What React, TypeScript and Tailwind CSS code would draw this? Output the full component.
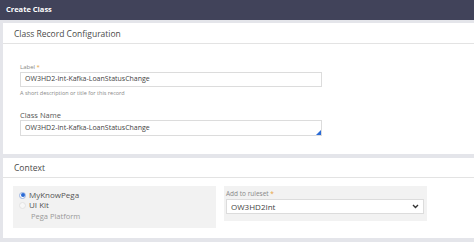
export default function App() {
  return (
    <div className="w-[474px] h-[242px] overflow-hidden bg-[#e4e5ea] font-['Open_Sans',sans-serif] text-[#333]">
      {/* Header bar */}
      <div className="h-[20px] bg-[#41435a] flex items-center px-[6px]">
        <span className="text-white text-[7.5px] font-bold leading-none">Create Class</span>
      </div>

      {/* Class Record Configuration */}
      <div className="mt-[3px] ml-[3px] bg-white h-[131px]">
        <div className="h-[21px] flex items-end pb-[4px] pl-[11px] border-b border-[#e3e3e3]">
          <span className="text-[8.5px] leading-[10px] text-[#4a4a4a]">Class Record Configuration</span>
        </div>
        <div className="pl-[17px] pt-[20px]">
          <div className="text-[6px] leading-[7px] text-[#888] h-[8px]">
            Label<span className="text-[#e8a33c]"> *</span>
          </div>
          <div className="w-[302px] h-[15px] border border-[#dcdcdc] flex items-center px-[4px] text-[7px] text-[#444]">
            OW3HD2-Int-Kafka-LoanStatusChange
          </div>
          <div className="text-[5.5px] text-[#888] leading-[8px] mt-[2px]">
            A short description or title for this record
          </div>
          <div className="text-[7.5px] leading-[9px] text-[#555] mt-[14px] h-[9px]">Class Name</div>
          <div className="relative w-[302px] h-[16px] border border-[#dcdcdc] flex items-center px-[4px] text-[7px] text-[#444]">
            OW3HD2-Int-Kafka-LoanStatusChange
            <svg className="absolute right-0 bottom-0" width="5" height="5" viewBox="0 0 5 5">
              <path d="M5 0 L5 5 L0 5 Z" fill="#2a6bd6" />
            </svg>
          </div>
        </div>
      </div>

      {/* Context */}
      <div className="mt-[4px] ml-[3px] bg-white h-[80px]">
        <div className="h-[20px] flex items-end pb-[4px] pl-[11px] border-b border-[#e3e3e3]">
          <span className="text-[8.5px] leading-[10px] text-[#4a4a4a]">Context</span>
        </div>
        <div className="flex pl-[10px] pt-[8px] gap-[8px]">
          <div className="w-[203px] h-[42px] bg-[#f2f2f2] pl-[6px] pt-[4px]">
            <div className="flex items-center gap-[3px] h-[10px] leading-none">
              <span className="w-[7px] h-[7px] rounded-full border border-[#9bb3e0] bg-white flex items-center justify-center">
                <span className="w-[4px] h-[4px] rounded-full bg-[#2a6bd6]" />
              </span>
              <span className="text-[8px] leading-[10px] text-[#555]">MyKnowPega</span>
            </div>
            <div className="flex items-center gap-[3px] h-[10px] leading-none">
              <span className="w-[7px] h-[7px] rounded-full border border-[#e3e3e3] bg-[#f7f7f7]" />
              <span className="text-[8px] leading-[10px] text-[#555]">UI Kit</span>
            </div>
            <div className="pl-[12px] text-[7.5px] leading-[10px] text-[#999] h-[12px] flex items-center">Pega Platform</div>
          </div>
          <div className="w-[203px] h-[35px] bg-[#f2f2f2] pl-[2px] pt-[4px]">
            <div className="text-[6.5px] leading-[8px] text-[#888] h-[8px]">
              Add to ruleset<span className="text-[#e8a33c]"> *</span>
            </div>
            <div className="w-[198px] h-[15px] mt-[1px] border border-[#dcdcdc] bg-white flex items-center justify-between px-[4px]">
              <span className="text-[8px] text-[#444]">OW3HD2Int</span>
              <svg width="7" height="5" viewBox="0 0 7 5">
                <path d="M1 1 L3.5 3.5 L6 1" stroke="#333" strokeWidth="1.4" fill="none" />
              </svg>
            </div>
          </div>
        </div>
      </div>
    </div>
  );
}
